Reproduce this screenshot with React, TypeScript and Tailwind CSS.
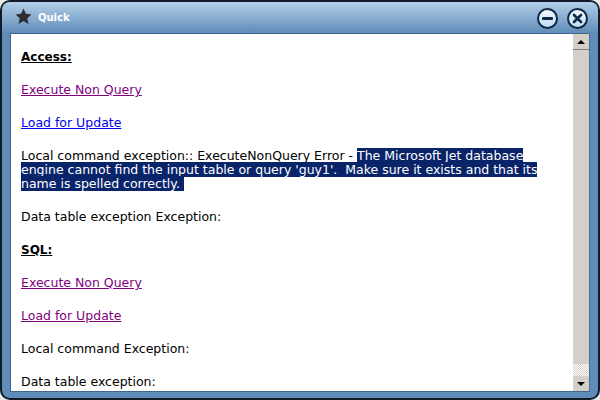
import React from "react";

const linkClass = "underline text-[#800080] w-fit";

function Section({ title, visited }: { title: string; visited?: boolean }) {
  return (
    <>
      <div className="font-bold text-[12px] text-black underline w-fit">{title}</div>
      <a className={linkClass}>Execute Non Query</a>
      <a className={visited ? "underline text-[#0000ee] w-fit" : linkClass}>Load for Update</a>
    </>
  );
}

function RoundButton({ children }: { children: React.ReactNode }) {
  return (
    <div className="w-[21px] h-[21px] rounded-full border-2 border-[#0d2a45] bg-gradient-to-b from-[#f4f9fd] to-[#bcdcf5] flex items-center justify-center">
      {children}
    </div>
  );
}

export default function App() {
  return (
    <div className="w-[600px] h-[400px] bg-[#e8e8e8] overflow-hidden" style={{ fontFamily: "'DejaVu Sans', Verdana, sans-serif" }}>
      <div className="w-full h-full bg-[#111c28] rounded-[10px] p-[2px]">
        <div className="w-full h-full rounded-[8px] bg-[#5f8cb8] flex flex-col pl-[8px] pr-[8px] pb-[6px]">
          {/* Title bar */}
          <div className="h-[31px] -mx-[8px] pl-[13px] pr-[10px] rounded-t-[8px] bg-gradient-to-b from-[#b3cfe7] to-[#5f8cb8] flex items-center shrink-0">
            <svg width="17" height="17" viewBox="0 0 16 16" className="mb-[2px]">
              <path d="M8 .5l2.2 5 5.3.5-4 3.6 1.2 5.4L8 12.2 3.3 15l1.2-5.4-4-3.6 5.3-.5z" fill="#2d2d2d" />
            </svg>
            <span className="ml-[6px] text-[10px] font-bold text-white">Quick</span>
            <div className="ml-auto flex gap-[9px] mt-[2px]">
              <RoundButton>
                <div className="w-[11px] h-[3px] bg-[#0d2a45] rounded-[1px]" />
              </RoundButton>
              <RoundButton>
                <svg width="11" height="11" viewBox="0 0 11 11">
                  <path d="M2 2l7 7M9 2l-7 7" stroke="#0d2a45" strokeWidth="2.6" strokeLinecap="round" />
                </svg>
              </RoundButton>
            </div>
          </div>
          {/* Content */}
          <div className="flex-1 min-h-0 flex bg-white border-t border-l border-b border-[#3f658a]">
            <div className="flex-1 overflow-hidden pl-[10px] pt-[16px] text-[12.5px] leading-[14px] text-black flex flex-col gap-[19px]">
              <Section title="Access:" visited={true} />
              <div className="w-[526px]">
                Local command exception:: ExecuteNonQuery Error -{" "}
                <span className="bg-[#0a246a] text-white">
                  The Microsoft Jet database engine cannot find the input table or query 'guy1'.&nbsp; Make sure it exists and that its name is spelled correctly.&nbsp;
                </span>
              </div>
              <div>Data table exception Exception:</div>
              <Section title="SQL:" />
              <div>Local command Exception:</div>
              <div>Data table exception:</div>
            </div>
            {/* Scrollbar */}
            <div className="w-[16px] shrink-0 bg-[#d4d0c8] flex flex-col">
              <div className="h-[16px] border-b border-[#808080] bg-[#d4d0c8] flex items-center justify-center">
                <div className="w-0 h-0 border-l-[4px] border-r-[4px] border-b-[4px] border-l-transparent border-r-transparent border-b-black" />
              </div>
              <div className="flex-1" />
              <div className="h-[12px] bg-[repeating-conic-gradient(#d4d0c8_0_25%,#ffffff_0_50%)] bg-[length:2px_2px]" />
              <div className="h-[15px] bg-[#d4d0c8] flex items-center justify-center">
                <div className="w-0 h-0 border-l-[4px] border-r-[4px] border-t-[4px] border-l-transparent border-r-transparent border-t-black" />
              </div>
            </div>
            <div className="w-[1px] shrink-0 bg-[#4a6f94]" />
          </div>
        </div>
      </div>
    </div>
  );
}
